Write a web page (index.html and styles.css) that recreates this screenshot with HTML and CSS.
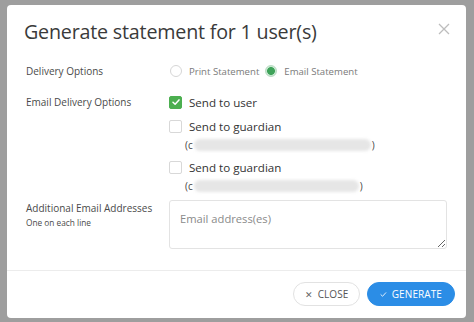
FILE: index.html
```html
<!DOCTYPE html>
<html>
<head>
<meta charset="utf-8">
<link rel="stylesheet" href="styles.css">
</head>
<body>
<div class="backdrop">
  <div class="modal">
    <div class="modal-header">
      <h1 class="title">Generate statement for 1 user(s)</h1>
      <button class="x-btn" aria-label="Close">
        <svg width="12" height="12" viewBox="0 0 12 12"><path d="M1 1L11 11M11 1L1 11" stroke="#bdbdbd" stroke-width="1.3" fill="none"/></svg>
      </button>
    </div>
    <div class="modal-body">
      <div class="row row-delivery">
        <div class="label">Delivery Options</div>
        <div class="radios">
          <label class="radio"><span class="radio-dot"></span>Print Statement</label>
          <label class="radio"><span class="radio-dot checked"></span>Email Statement</label>
        </div>
      </div>
      <div class="row row-email">
        <div class="label label-email">Email Delivery Options</div>
        <div class="checks">
          <div class="check-item">
            <div class="check-line"><span class="box checked"><svg width="10" height="10" viewBox="0 0 10 10"><path d="M2 5.2L4.1 7.2L8 2.9" stroke="#fff" stroke-width="1.5" fill="none" stroke-linecap="round" stroke-linejoin="round"/></svg></span>Send to user</div>
          </div>
          <div class="check-item">
            <div class="check-line"><span class="box"></span>Send to guardian</div>
            <div class="sub-line">(c<span class="blur blur-long"></span>)</div>
          </div>
          <div class="check-item">
            <div class="check-line"><span class="box"></span>Send to guardian</div>
            <div class="sub-line">(c<span class="blur blur-short"></span>)</div>
          </div>
        </div>
      </div>
      <div class="row row-additional">
        <div class="label-stack">
          <div class="label">Additional Email Addresses</div>
          <div class="hint">One on each line</div>
        </div>
        <textarea class="emails" placeholder="Email address(es)"></textarea>
      </div>
    </div>
    <div class="modal-footer">
      <button class="btn btn-close"><span class="btn-ico">✕</span>CLOSE</button>
      <button class="btn btn-generate"><svg class="chk" width="11" height="11" viewBox="0 0 11 11"><path d="M1.5 5.8L4.2 8.4L9.5 2.6" stroke="#fff" stroke-width="1.4" fill="none" stroke-linecap="round" stroke-linejoin="round"/></svg>GENERATE</button>
    </div>
  </div>
</div>
</body>
</html>
```

FILE: styles.css
```css
* { box-sizing: border-box; }
html, body { margin: 0; padding: 0; }
body {
  width: 474px;
  height: 322px;
  overflow: hidden;
  background: #9e9e9e;
  font-family: "Open Sans", "Noto Sans", sans-serif;
}
.backdrop {
  padding: 5px 8px 4px 7px;
}
.modal {
  width: 459px;
  height: 313px;
  background: #fff;
  border-radius: 4px;
  display: flex;
  flex-direction: column;
}
.modal-header {
  height: 52px;
  display: flex;
  align-items: center;
  justify-content: space-between;
  padding: 0 16px 0 17px;
}
.title {
  margin: 0;
  font-size: 19.7px;
  font-weight: 400;
  color: #3a3a3a;
  letter-spacing: -0.2px;
}
.x-btn {
  border: none;
  background: none;
  padding: 0;
  margin-top: -4px;
  width: 12px;
  height: 12px;
  display: flex;
}
.modal-body {
  padding: 0 19px 21px 19px;
  flex: 1;
}
.row {
  display: grid;
  grid-template-columns: 143px 1fr;
}
.label {
  font-size: 10px;
  color: #4a4a4a;
}
.row-delivery {
  height: 28px;
  align-items: center;
}
.radios {
  display: flex;
  gap: 6px;
  padding-left: 1px;
}
.radio {
  display: flex;
  align-items: center;
  gap: 7px;
  font-size: 9.6px;
  color: #7a7a7a;
}
.radio-dot {
  width: 12px;
  height: 12px;
  border-radius: 50%;
  border: 1px solid #d6d6d6;
  background: #fff;
}
.radio-dot.checked {
  border-color: #b9dcc3;
  background: radial-gradient(circle, #3fa35a 0 3.6px, #c8e7d1 4.2px 100%);
}
.row-email {
  margin-top: 7px;
}
.label-email {
  line-height: 20px;
}
.checks {
  display: flex;
  flex-direction: column;
  gap: 4px;
}
.check-line {
  display: flex;
  align-items: center;
  gap: 7px;
  height: 20px;
  font-size: 11.6px;
  color: #333;
}
.box {
  width: 13px;
  height: 13px;
  border: 1px solid #d8d8d8;
  border-radius: 2px;
  background: #fff;
  display: flex;
  align-items: center;
  justify-content: center;
}
.box.checked {
  background: #4caf50;
  border-color: #4caf50;
}
.sub-line {
  height: 17px;
  display: flex;
  align-items: center;
  padding-left: 16px;
  font-size: 10px;
  color: #444;
}
.blur {
  display: inline-block;
  height: 12px;
  background: #e6e6e6;
  border-radius: 6px;
  filter: blur(1.5px);
  margin: 0 1px 0 1px;
}
.blur-long { width: 177px; }
.blur-short { width: 165px; }
.row-additional {
  margin-top: 6px;
}
.label-stack .label {
  line-height: 16px;
}
.hint {
  font-size: 8.3px;
  color: #4a4a4a;
  line-height: 14px;
}
.emails {
  height: 49px;
  width: 278px;
  resize: vertical;
  border: 1px solid #e3e3e3;
  border-radius: 3px;
  padding: 10px 10px 8px 10px;
  font-family: "Open Sans", "Noto Sans", sans-serif;
  font-size: 11.2px;
  color: #333;
  outline: none;
}
.emails::placeholder {
  color: #8a8a8a;
}
.modal-footer {
  border-top: 1px solid #ececec;
  height: 48px;
  display: flex;
  justify-content: flex-end;
  align-items: flex-start;
  padding: 11px 11px 0 0;
  gap: 7px;
}
.btn {
  height: 24px;
  border-radius: 12px;
  font-family: "Open Sans", "Noto Sans", sans-serif;
  font-size: 10px;
  display: flex;
  align-items: center;
  gap: 5px;
  padding: 0 12px;
  letter-spacing: 0.1px;
}
.btn-close {
  width: 67px;
  background: #fff;
  border: 1px solid #e2e2e2;
  color: #555;
  justify-content: center;
}
.btn-ico {
  font-size: 9px;
  color: #666;
}
.btn-generate {
  width: 88px;
  background: #2b8de6;
  border: 1px solid #2b8de6;
  color: #fff;
  justify-content: center;
}
```
